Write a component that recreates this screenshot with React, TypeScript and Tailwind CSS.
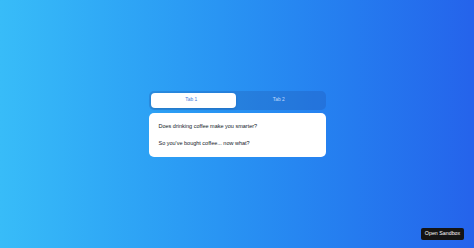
import React, { useState } from "react";

export default function App() {
  const [tab, setTab] = useState(0);
  const font = { fontFamily: '"Liberation Sans", Arial, sans-serif' };
  return (
    <div
      className="relative flex h-[248px] w-full items-center justify-center bg-gradient-to-r from-[#38bcf8] to-[#2563eb]"
      style={font}
    >
      <div className="w-[177px]">
        <div className="flex gap-[2px] rounded-[5px] bg-[#1e3a8a]/20 p-[2px]">
          {["Tab 1", "Tab 2"].map((t, i) => (
            <button
              key={t}
              onClick={() => setTab(i)}
              className={
                "flex h-[15px] flex-1 items-center justify-center rounded-[4px] text-[4.9px] leading-none " +
                (tab === i
                  ? "bg-white text-[#3f76d8] shadow"
                  : "text-[#c3dafc]")
              }
            >
              <span className="-translate-x-[2px]">{t}</span>
            </button>
          ))}
        </div>
        <div className="mt-[3px] rounded-[5px] bg-white px-[10px] py-[5px]">
          <div className="flex h-[17px] items-center text-[5.5px] leading-none text-[#111827]">
            Does drinking coffee make you smarter?
          </div>
          <div className="flex h-[17px] items-center text-[5.5px] leading-none text-[#111827]">
            So you've bought coffee... now what?
          </div>
        </div>
      </div>
      <div className="absolute bottom-[8px] right-[10px] flex h-[12px] w-[43px] items-center justify-center rounded-[2px] bg-[#141414] text-[5.3px] leading-none text-white">
        Open Sandbox
      </div>
    </div>
  );
}
